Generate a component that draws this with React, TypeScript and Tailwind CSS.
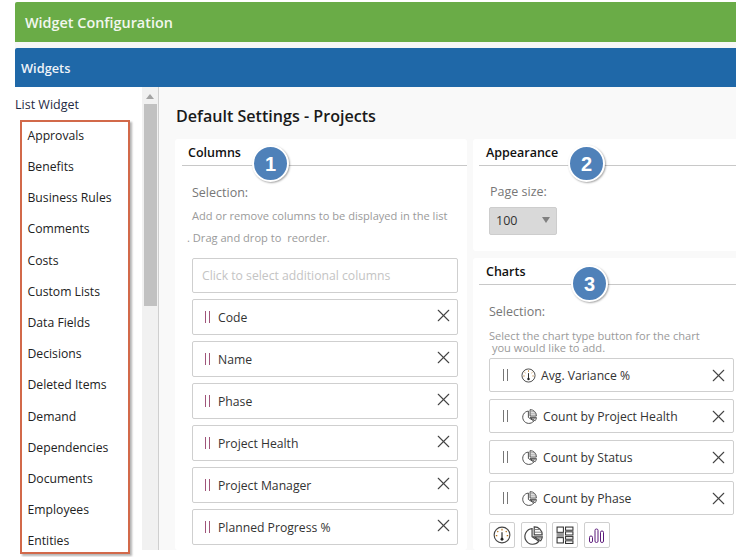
import React from 'react';
import { X } from 'lucide-react';

const widgets = [
  'Approvals',
  'Benefits',
  'Business Rules',
  'Comments',
  'Costs',
  'Custom Lists',
  'Data Fields',
  'Decisions',
  'Deleted Items',
  'Demand',
  'Dependencies',
  'Documents',
  'Employees',
  'Entities',
];

const columns = ['Code', 'Name', 'Phase', 'Project Health', 'Project Manager', 'Planned Progress %'];

const GaugeIcon = ({ size = 15 }: { size?: number }) => (
  <svg width={size} height={size} viewBox="0 0 16 16" fill="none" stroke="#444" strokeWidth="1">
    <circle cx="8" cy="8" r="7" />
    <path d="M8 2.5v1.5M3.8 4.5l.9.8M12.2 4.5l-.9.8M2.5 8.5h1.3M12.2 8.5h1.3" stroke="#b8741a" />
    <path d="M8 5.5V11" stroke="#222" />
    <circle cx="8" cy="11.8" r="1.3" fill="#222" stroke="none" />
  </svg>
);

const PieIcon = ({ size = 15 }: { size?: number }) => (
  <svg width={size} height={size} viewBox="0 0 16 16" fill="none" stroke="#444" strokeWidth="1">
    <path d="M6.8 2.2a6.6 6.6 0 1 0 5.8 10.6L6.8 9z" />
    <path d="M8.6 .7a6.5 6.5 0 0 1 6.7 6.8H8.6z" />
    <path d="M8.6 9.2h6.8a6.5 6.5 0 0 1-1.4 3.3z" />
    <path d="M9 3h5M9 5.2h6M11 10.2h3.5" stroke="#777" strokeWidth="0.8" />
  </svg>
);

const LayoutIcon = () => (
  <svg width="18" height="18" viewBox="0 0 17 17" fill="none" stroke="#333" strokeWidth="1">
    <rect x="1" y="1" width="6" height="5" />
    <rect x="1" y="7" width="6" height="3" fill="#999" stroke="#999" />
    <rect x="1" y="11" width="6" height="5" />
    <rect x="9" y="1" width="7" height="3" />
    <rect x="9" y="5.5" width="7" height="3" />
    <rect x="9" y="10" width="7" height="2.5" />
    <rect x="9" y="14" width="7" height="2.5" />
  </svg>
);

const BarsIcon = () => (
  <svg width="15" height="15" viewBox="0 0 15 15" fill="none" stroke="#5b1a7a" strokeWidth="1">
    <rect x="0.5" y="8" width="3" height="6.5" rx="1.4" />
    <rect x="6" y="1" width="3" height="13.5" rx="1.4" />
    <rect x="11.5" y="3" width="3" height="11.5" rx="1.4" />
  </svg>
);

const Badge = ({ n, className }: { n: number; className: string }) => (
  <div
    className={`absolute flex h-[37px] w-[37px] items-center justify-center rounded-full border-2 border-white bg-[#4f81b9] text-[20px] font-bold text-white shadow-[1px_1px_2px_rgba(0,0,0,0.35)] ${className}`}
    style={{ fontFamily: '"Liberation Sans", sans-serif' }}
  >
    {n}
  </div>
);

const DragHandle = ({ className }: { className: string }) => (
  <span className={`mr-[8px] flex h-[12px] w-[5px] shrink-0 justify-between ${className}`}>
    <span className="h-full w-px bg-current" />
    <span className="h-full w-px bg-current" />
  </span>
);

const IconButton = ({ children }: { children: React.ReactNode }) => (
  <div className="flex h-[26px] w-[26px] items-center justify-center rounded-[2px] border border-[#cfcfcf]">{children}</div>
);

export default function App() {
  return (
    <div
      className="flex h-[557px] w-[736px] flex-col overflow-hidden bg-white pl-[15px] pt-[2px] text-[12.2px] text-[#222]"
      style={{ fontFamily: '"Open Sans", "Noto Sans", sans-serif' }}
    >
      {/* Header bars */}
      <div className="flex h-[40px] shrink-0 items-center rounded-tl-[2px] bg-[#6aac47] pl-[10px] pt-[2px] text-[14.4px] font-semibold text-[#f2f7ee]">
        Widget Configuration
      </div>
      <div className="h-[6px] shrink-0 bg-[#f7f7f7]" />
      <div className="flex h-[39px] shrink-0 items-center rounded-tl-[2px] bg-[#1f68a8] pl-[6px] pt-[2px] text-[12.8px] font-semibold text-[#eef3f8]">
        Widgets
      </div>

      <div className="flex min-h-0 flex-1 items-start">
        {/* Sidebar */}
        <div className="w-[127px] shrink-0 pt-[9px]">
          <div className="h-[18px] text-[12.5px] leading-[18px] text-[#1f2a44]">List Widget</div>
          <div className="ml-[5px] mt-[6px] h-[434px] w-[110px] border-[2.5px] border-[#d2694a] pl-[5.5px] shadow-[2px_2px_2px_rgba(0,0,0,0.3)]">
            <div className="flex flex-col pt-[1.9px]">
              {widgets.map((w) => (
                <div key={w} className="h-[31.2px] leading-[24px] text-[#222]">
                  {w}
                </div>
              ))}
            </div>
          </div>
        </div>

        {/* Scrollbar */}
        <div className="flex h-[463px] w-[16px] shrink-0 flex-col items-center bg-[#f1f1f1]">
          <div className="mt-[7px] h-0 w-0 border-x-[4px] border-b-[5px] border-x-transparent border-b-[#a3a3a3]" />
          <div className="mt-[5px] h-[202px] w-[13px] bg-[#c1c1c1]" />
        </div>

        {/* Main */}
        <div className="h-[463px] min-w-0 flex-1 overflow-hidden border-l border-[#cfcfcf] bg-[#f9f9f9] pl-[16px]">
          <h1 className="ml-[1px] mt-[18px] h-[22px] text-[16.1px] font-semibold leading-[22px] text-[#1a1a1a]">
            Default Settings - Projects
          </h1>

          <div className="mt-[12px] flex gap-[6px]">
            {/* Columns */}
            <div className="relative h-[411px] w-[292px] shrink-0 rounded-[3px] bg-white">
              <div className="ml-[7px] h-[27px] border-b border-[#c8c8c8] pl-[6px] text-[12.5px] font-semibold leading-[27px] text-[#111]">
                Columns
              </div>
              <Badge n={1} className="left-[77px] top-[6px]" />
              <div className="pl-[17px] pt-[18px]">
                <div className="text-[12.5px] leading-[18px] text-[#777]">Selection:</div>
                <div className="mt-[3px] text-[11.1px] leading-[22px] text-[#9a9a9a]">
                  Add or remove columns to be displayed in the list
                </div>
                <div className="-ml-[5px] text-[11.1px] leading-[22px] text-[#9a9a9a]">. Drag and drop to&nbsp; reorder.</div>
                <div className="mt-[9px] flex h-[35px] w-[266px] items-center rounded-[2px] border border-[#cfcfcf] pl-[9px] pt-[2px] text-[#c4c4c4]">
                  Click to select additional columns
                </div>
                <div className="mt-[6px] flex w-[266px] flex-col gap-[6px]">
                  {columns.map((c) => (
                    <div key={c} className="flex h-[36px] items-center rounded-[2px] border border-[#cfcfcf] pl-[12px] pr-[3.5px] text-[#333]">
                      <DragHandle className="text-[#a0557a]" />
                      <span className="flex-1 pt-[2px]">{c}</span>
                      <X size={21} strokeWidth={1.25} className="-mt-[4px] text-[#444]" />
                    </div>
                  ))}
                </div>
              </div>
            </div>

            {/* Right column */}
            <div className="flex min-w-0 flex-1 flex-col gap-[7px]">
              <div className="relative h-[112px] rounded-l-[3px] bg-white">
                <div className="ml-[6px] h-[27px] border-b border-[#c8c8c8] pl-[7px] text-[12.5px] font-semibold leading-[27px] text-[#111]">
                  Appearance
                </div>
                <Badge n={2} className="left-[95px] top-[6px]" />
                <div className="pl-[16px] pt-[17px]">
                  <div className="ml-[1px] text-[12.5px] leading-[18px] text-[#777]">Page size:</div>
                  <div className="mt-[6px] flex h-[28px] w-[68px] items-center rounded-[2px] border border-[#cdcdcd] bg-[#d9d9d9] pl-[6px] pt-[1px] text-[12.5px] text-[#333]">
                    100
                    <span className="-mt-[4px] ml-[25px] h-0 w-0 border-x-[4px] border-t-[6px] border-x-transparent border-t-[#808080]" />
                  </div>
                </div>
              </div>

              <div className="relative h-[292px] rounded-l-[3px] bg-white">
                <div className="ml-[6px] h-[27px] border-b border-[#c8c8c8] pl-[7px] text-[12.5px] font-semibold leading-[27px] text-[#111]">
                  Charts
                </div>
                <Badge n={3} className="left-[98px] top-[7px]" />
                <div className="pl-[16px] pt-[18px]">
                  <div className="text-[12.5px] leading-[18px] text-[#777]">Selection:</div>
                  <div className="mt-[9px] text-[11.1px] leading-[12px] text-[#9a9a9a]">
                    Select the chart type button for the chart
                    <br />
                    &nbsp;you would like to add.
                  </div>
                  <div className="mt-[4px] flex w-[245px] flex-col gap-[7px]">
                    {['Avg. Variance %', 'Count by Project Health', 'Count by Status', 'Count by Phase'].map((c, i) => (
                      <div key={c} className="flex h-[34px] items-center rounded-[2px] border border-[#cfcfcf] pl-[13px] pr-[3.8px] text-[#333]">
                        <DragHandle className="text-[#777]" />
                        {i === 0 ? (
                          <span className="ml-[5px] w-[20px]"><GaugeIcon /></span>
                        ) : (
                          <span className="ml-[6px] w-[21px]"><PieIcon /></span>
                        )}
                        <span className="flex-1 pt-[2px]">{c}</span>
                        <X size={21} strokeWidth={1.25} className="text-[#444]" />
                      </div>
                    ))}
                  </div>
                  <div className="mt-[7px] flex gap-[5.5px]">
                    <IconButton><GaugeIcon size={18} /></IconButton>
                    <IconButton><PieIcon size={19} /></IconButton>
                    <IconButton><LayoutIcon /></IconButton>
                    <IconButton><BarsIcon /></IconButton>
                  </div>
                </div>
              </div>
            </div>
          </div>
        </div>
      </div>
    </div>
  );
}
